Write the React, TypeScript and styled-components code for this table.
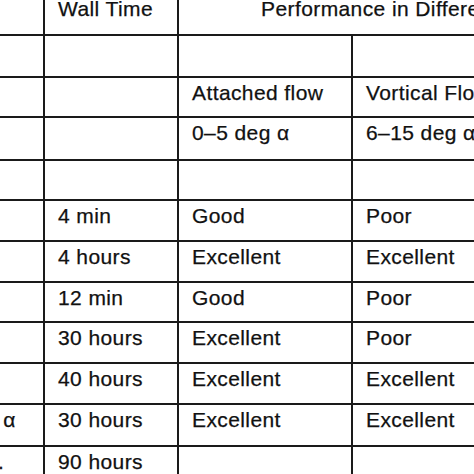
import styled, { createGlobalStyle } from 'styled-components';

const GlobalStyle = createGlobalStyle`
  html, body {
    margin: 0;
    padding: 0;
    background: #ffffff;
    overflow: hidden;
  }
`;

type Rating = 'Good' | 'Excellent' | 'Poor' | '';

interface MethodRow {
  method: string;
  wallTime: string;
  attached: Rating;
  vortical: Rating;
  separated: Rating;
  height: number;
}

const methods: MethodRow[] = [
  { method: 'Panel code', wallTime: '4 min', attached: 'Good', vortical: 'Poor', separated: 'Poor', height: 41 },
  { method: 'Euler', wallTime: '4 hours', attached: 'Excellent', vortical: 'Excellent', separated: 'Poor', height: 41 },
  { method: 'Vortex lattice', wallTime: '12 min', attached: 'Good', vortical: 'Poor', separated: 'Poor', height: 40 },
  { method: 'RANS, coarse', wallTime: '30 hours', attached: 'Excellent', vortical: 'Poor', separated: 'Good', height: 41 },
  { method: 'RANS, fine', wallTime: '40 hours', attached: 'Excellent', vortical: 'Excellent', separated: 'Good', height: 41 },
  { method: 'RANS 0–25 deg α', wallTime: '30 hours', attached: 'Excellent', vortical: 'Excellent', separated: 'Good', height: 42 },
  { method: 'Unsteady RANS.', wallTime: '90 hours', attached: '', vortical: '', separated: '', height: 42 },
];

function App() {
  return (
    <>
      <GlobalStyle />
      <Viewport>
        <Table>
          <colgroup>
            <Col $width={218} />
            <Col $width={134} />
            <Col $width={174} />
            <Col $width={175} />
            <Col $width={198} />
          </colgroup>
          <tbody>
            <Row $height={42}>
              <Cell>Method</Cell>
              <Cell>Wall Time</Cell>
              <Cell colSpan={3} $align="center">
                Performance in Different Flow Regimes
              </Cell>
            </Row>
            <Row $height={42}>
              <Cell />
              <Cell />
              <Cell />
              <Cell />
              <Cell />
            </Row>
            <Row $height={40}>
              <Cell />
              <Cell />
              <Cell>Attached flow</Cell>
              <Cell>Vortical Flow</Cell>
              <Cell>Separated flow</Cell>
            </Row>
            <Row $height={43}>
              <Cell />
              <Cell />
              <Cell>0–5 deg α</Cell>
              <Cell>6–15 deg α</Cell>
              <Cell>&gt;15 deg α</Cell>
            </Row>
            <Row $height={40}>
              <Cell />
              <Cell />
              <Cell />
              <Cell />
              <Cell />
            </Row>
            {methods.map((m, i) => (
              <Row key={i} $height={m.height}>
                <Cell>{m.method}</Cell>
                <Cell>{m.wallTime}</Cell>
                <Cell>{m.attached}</Cell>
                <Cell>{m.vortical}</Cell>
                <Cell>{m.separated}</Cell>
              </Row>
            ))}
          </tbody>
        </Table>
      </Viewport>
    </>
  );
}

const Viewport = styled.div`
  width: 474px;
  height: 474px;
  overflow: hidden;
  background: #ffffff;
`;

const Table = styled.table`
  border-collapse: collapse;
  table-layout: fixed;
  width: 899px;
  margin: -8px 0 0 -175px;
  font-family: 'Liberation Sans', Arial, sans-serif;
  font-size: 21px;
  letter-spacing: 0.4px;
  color: #111111;
  -webkit-text-stroke: 0.25px #111111;
`;

const Col = styled.col<{ $width: number }>`
  width: ${(p) => p.$width}px;
`;

const Row = styled.tr<{ $height: number }>`
  height: ${(p) => p.$height}px;
`;

const Cell = styled.td<{ $align?: 'left' | 'center' }>`
  border: 2px solid #1a1a1a;
  padding: 4px 13px 0;
  vertical-align: top;
  text-align: ${(p) => p.$align ?? 'left'};
  white-space: nowrap;
  overflow: hidden;
  line-height: 22px;
`;

export default App;
